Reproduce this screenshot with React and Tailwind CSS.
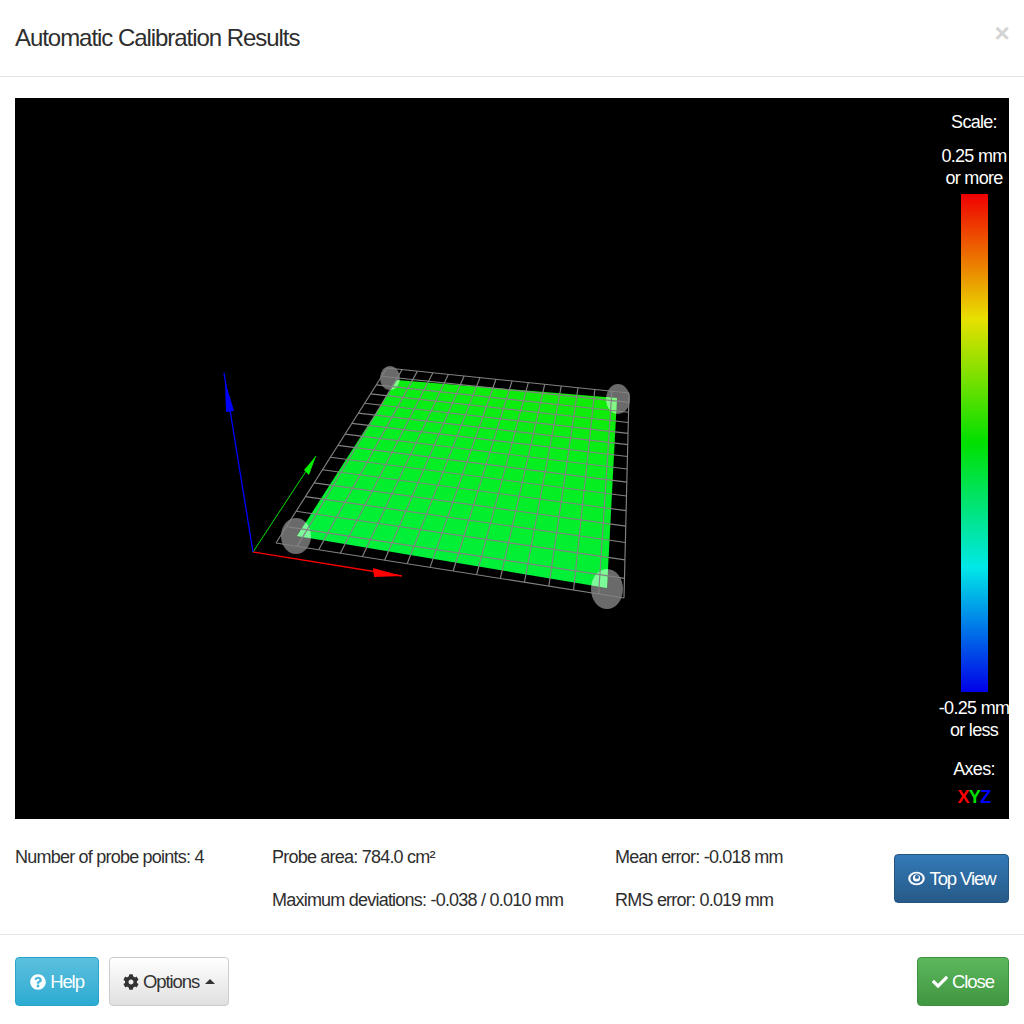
import { FaCheck, FaCog, FaQuestionCircle } from "react-icons/fa";

// maps the unit square onto a screen quad so the grid gets real perspective
function makeHomography([p0, p1, p2, p3]) {
  const dx1 = p1[0] - p2[0];
  const dx2 = p3[0] - p2[0];
  const dy1 = p1[1] - p2[1];
  const dy2 = p3[1] - p2[1];
  const sx = p0[0] - p1[0] + p2[0] - p3[0];
  const sy = p0[1] - p1[1] + p2[1] - p3[1];
  const det = dx1 * dy2 - dx2 * dy1;
  const g = (sx * dy2 - dx2 * sy) / det;
  const h = (dx1 * sy - sx * dy1) / det;
  const a = p1[0] - p0[0] + g * p1[0];
  const b = p3[0] - p0[0] + h * p3[0];
  const d = p1[1] - p0[1] + g * p1[1];
  const e = p3[1] - p0[1] + h * p3[1];
  return (u, v) => {
    const w = g * u + h * v + 1;
    return [(a * u + b * v + p0[0]) / w, (d * u + e * v + p0[1]) / w];
  };
}

const GRID_CORNERS = [
  [387, 368],
  [629, 393],
  [624, 598],
  [276, 543],
];
const GRID_CELLS = 15;
const PLATE = "397,380 617,398 607,588 297,536";
const PROBES = [
  { cx: 390, cy: 378, rx: 10, ry: 12 },
  { cx: 618, cy: 399, rx: 12, ry: 15 },
  { cx: 296, cy: 536, rx: 15, ry: 18 },
  { cx: 607, cy: 589, rx: 16, ry: 20 },
];

function CalibrationScene() {
  const project = makeHomography(GRID_CORNERS);
  const steps = Array.from({ length: GRID_CELLS + 1 }, (_, i) => i / GRID_CELLS);

  return (
    <svg viewBox="15 98 994 721" className="block h-full w-full">
      <defs>
        <linearGradient id="plate" x1="0.9" y1="0" x2="0.5" y2="1">
          <stop offset="0" stopColor="#14ea00" />
          <stop offset="0.35" stopColor="#06ee1c" />
          <stop offset="1" stopColor="#00f040" />
        </linearGradient>
        <clipPath id="plate-clip">
          <polygon points={PLATE} />
        </clipPath>
      </defs>

      {PROBES.map((p) => (
        <ellipse key={p.cx} {...p} fill="#6a6a6a" />
      ))}
      <polygon points={PLATE} fill="url(#plate)" />
      <g clipPath="url(#plate-clip)">
        {PROBES.map((p) => (
          <ellipse key={p.cx} {...p} fill="#d0ffdc" opacity="0.6" />
        ))}
      </g>

      <g stroke="#828282" strokeWidth="1.15">
        {steps.map((t) => {
          const a = project(t, 0);
          const b = project(t, 1);
          const c = project(0, t);
          const d = project(1, t);
          return (
            <g key={t}>
              <line x1={a[0]} y1={a[1]} x2={b[0]} y2={b[1]} />
              <line x1={c[0]} y1={c[1]} x2={d[0]} y2={d[1]} />
            </g>
          );
        })}
      </g>

      <line x1="253" y1="552" x2="402" y2="576" stroke="#ff0000" strokeWidth="1.4" />
      <polygon points="402,576 373,568 374,577" fill="#ff0000" />
      <line x1="253" y1="552" x2="316" y2="456" stroke="#00e000" strokeWidth="1" />
      <polygon points="316,456 304,470 309,475" fill="#00f000" />
      <line x1="253" y1="552" x2="224" y2="373" stroke="#0000ff" strokeWidth="1.3" />
      <polygon points="225,381 226,412 234,411" fill="#0000ff" />
    </svg>
  );
}

function ScaleLegend() {
  return (
    <div className="absolute inset-y-0 right-0 flex w-[70px] flex-col items-center text-[18px] leading-[22px] tracking-[-0.7px] text-white">
      <div className="mt-[13px]">Scale:</div>
      <div className="mt-[12px] whitespace-nowrap">0.25 mm</div>
      <div>or more</div>
      <div className="mt-[5px] h-[498px] w-[27px] shrink-0 bg-[linear-gradient(to_bottom,#f00000,#e8e000_25%,#00e000_50%,#00e8e8_75%,#0000e8)]" />
      <div className="mt-[5px] whitespace-nowrap">-0.25 mm</div>
      <div>or less</div>
      <div className="mt-[17px]">Axes:</div>
      <div className="mt-[6px] font-bold">
        <span className="text-[#ff0000]">X</span>
        <span className="text-[#00e000]">Y</span>
        <span className="text-[#0000ff]">Z</span>
      </div>
    </div>
  );
}

function EyeIcon() {
  return (
    <svg viewBox="0 0 17 15" className="h-[15px] w-[17px] shrink-0">
      <ellipse cx="8.5" cy="7.5" rx="8.3" ry="6.8" fill="#ffffff" />
      <ellipse cx="8.5" cy="7.5" rx="6.1" ry="4.9" fill="#2f6aa0" />
      <circle cx="8.5" cy="7" r="3.6" fill="#ffffff" />
      <circle cx="8.9" cy="5.9" r="2" fill="#2f6aa0" />
    </svg>
  );
}

export default function App() {
  return (
    <div className="h-[1024px] overflow-hidden bg-white font-['Liberation_Sans',Arial,sans-serif] text-[18px] tracking-[-0.78px] text-[#2e2e2e]">
      <header className="flex h-[77px] items-center justify-between border-b border-[#e5e5e5] px-[15px] pb-[1px]">
        <h1 className="text-[24px] leading-none tracking-[-1.05px]">Automatic Calibration Results</h1>
        <span className="mb-[9px] text-[26px] font-bold leading-none text-[#d4d4d4]">×</span>
      </header>

      <main className="h-[858px] border-b border-[#e5e5e5] px-[15px] pt-[21px]">
        <div className="relative h-[721px] bg-black">
          <CalibrationScene />
          <ScaleLegend />
        </div>

        <div className="mt-[27px] grid grid-cols-[257px_343px_1fr_auto] leading-[22px]">
          <div className="col-start-1 row-start-1">Number of probe points: 4</div>
          <div className="col-start-2 row-start-1">Probe area: 784.0 cm²</div>
          <div className="col-start-3 row-start-1">Mean error: -0.018 mm</div>
          <div className="col-start-2 row-start-2 mt-[21px]">Maximum deviations: -0.038 / 0.010 mm</div>
          <div className="col-start-3 row-start-2 mt-[21px]">RMS error: 0.019 mm</div>
          <button className="col-start-4 row-span-2 row-start-1 mt-[8px] flex h-[49px] w-[115px] items-center justify-center gap-[5px] self-start rounded-[4px] border border-[#245580] bg-linear-to-b from-[#337ab7] to-[#265a88] text-[18.5px] tracking-[-1.1px] text-white">
            <EyeIcon />
            Top View
          </button>
        </div>
      </main>

      <footer className="flex items-center justify-between px-[15px] pt-[22px] text-[18.5px] tracking-[-1.1px]">
        <div className="flex gap-[10px]">
          <button className="flex h-[49px] w-[84px] items-center justify-center gap-[4px] rounded-[4px] border border-[#28a4c9] bg-linear-to-b from-[#5bc0de] to-[#2aabd2] text-white">
            <FaQuestionCircle size={16} />
            Help
          </button>
          <button className="flex h-[49px] w-[120px] items-center justify-center gap-[4px] rounded-[4px] border border-[#cccccc] bg-linear-to-b from-white to-[#e0e0e0] text-[#333333]">
            <FaCog size={16} />
            Options
            <span className="ml-[2px] h-0 w-0 border-x-[5px] border-b-[5px] border-x-transparent border-b-[#333333]" />
          </button>
        </div>
        <button className="flex h-[49px] w-[92px] items-center justify-center gap-[4px] rounded-[4px] border border-[#3e8f3e] bg-linear-to-b from-[#5cb85c] to-[#419641] text-white">
          <FaCheck size={16} />
          Close
        </button>
      </footer>
    </div>
  );
}
